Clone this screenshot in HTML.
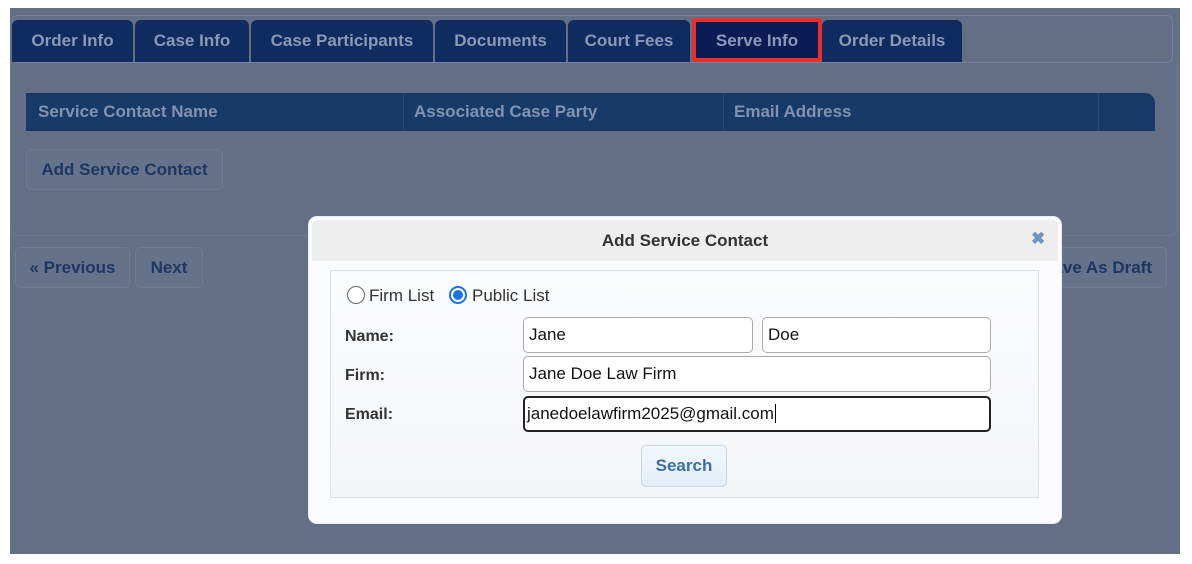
<!DOCTYPE html>
<html><head><meta charset="utf-8"><style>
*{box-sizing:border-box;margin:0;padding:0}
body{width:1192px;height:564px;background:#fff;position:relative;overflow:hidden;font-family:"Liberation Sans",Arial,sans-serif}
.a{position:absolute}
.ov{left:10px;top:8px;width:1170px;height:546px;background:#646e85}
.tab{top:20px;height:42px;background:#0f2b5f;border-radius:6px 6px 0 0;color:#8a9ab6;font-weight:bold;font-size:17px;line-height:42px;text-align:center}
.hdr{left:26px;top:93px;width:1129px;height:38px;background:#183a68;border-radius:0 10px 0 0;color:#8392ae;font-weight:bold;font-size:17px;line-height:38px}
.btn{border:1px solid #6f7b95;border-radius:5px;color:#1c3763;font-weight:bold;font-size:17px;text-align:center;background:#66728a}
.lbl{left:345px;font-weight:bold;font-size:16px;color:#333}
.inp{background:#fff;border:1px solid #aaa;border-radius:5px;font-size:17px;color:#111;padding-left:5px;line-height:34px}
</style></head><body>
<div class="a ov"></div>
<div class="a" style="left:12px;top:15px;width:1161px;height:48px;border:1px solid #7680a0;border-radius:6px"></div>
<div class="a" style="left:10px;top:62px;width:1168px;height:174px;border:1px solid #6e7895;border-top:none;border-radius:0 0 8px 8px"></div>
<div class="a tab" style="left:12px;width:121px">Order Info</div>
<div class="a tab" style="left:135px;width:114px">Case Info</div>
<div class="a tab" style="left:251px;width:182px">Case Participants</div>
<div class="a tab" style="left:435px;width:131px">Documents</div>
<div class="a tab" style="left:568px;width:122px">Court Fees</div>
<div class="a tab" style="left:692px;top:18px;width:130px;height:44px;background:#0b1c55;border:4px solid #e8302a;border-radius:2px;line-height:38px">Serve Info</div>
<div class="a tab" style="left:822px;width:140px">Order Details</div>
<div class="a hdr">
<span class="a" style="left:12px">Service Contact Name</span>
<span class="a" style="left:377px;top:0;width:1px;height:38px;background:#2a4a76"></span>
<span class="a" style="left:388px">Associated Case Party</span>
<span class="a" style="left:697px;top:0;width:1px;height:38px;background:#2a4a76"></span>
<span class="a" style="left:708px">Email Address</span>
<span class="a" style="left:1072px;top:0;width:1px;height:38px;background:#2a4a76"></span>
</div>
<div class="a btn" style="left:26px;top:149px;width:197px;height:41px;line-height:39px">Add Service Contact</div>
<div class="a btn" style="left:15px;top:247px;width:115px;height:41px;line-height:39px">« Previous</div>
<div class="a btn" style="left:135px;top:247px;width:68px;height:41px;line-height:39px">Next</div>
<div class="a btn" style="left:1000px;top:247px;width:167px;height:41px;line-height:39px;text-align:right;padding-right:14px">Save As Draft</div>

<div class="a" style="left:308px;top:216px;width:754px;height:308px;background:#fbfcfd;border-radius:9px;border:1px solid #e8eef6"></div>
<div class="a" style="left:312px;top:220px;width:746px;height:41px;background:#eeeeee;border-radius:6px 6px 0 0;text-align:center;font-weight:bold;font-size:17px;line-height:41px;color:#333">Add Service Contact</div>
<div class="a" style="left:1031px;top:229px;color:#6f94c4;font-weight:bold;font-size:17px">✖</div>
<div class="a" style="left:330px;top:270px;width:709px;height:228px;border:1px solid #dcdfe3;background:linear-gradient(#fbfcfd,#f4f5f7)"></div>
<div class="a" style="left:347px;top:286px;width:18px;height:18px;border:1.5px solid #666;border-radius:50%;background:#fff"></div>
<div class="a" style="left:369px;top:286px;font-size:17px;color:#333">Firm List</div>
<div class="a" style="left:449px;top:286px;width:18px;height:18px;border:2px solid #1a73e8;border-radius:50%;background:#fff"></div>
<div class="a" style="left:453px;top:290px;width:10px;height:10px;border-radius:50%;background:#1a73e8"></div>
<div class="a" style="left:472px;top:286px;font-size:17px;color:#333">Public List</div>
<div class="a lbl" style="top:328px">Name:</div>
<div class="a lbl" style="top:367px">Firm:</div>
<div class="a lbl" style="top:406px">Email:</div>
<div class="a inp" style="left:523px;top:317px;width:230px;height:36px">Jane</div>
<div class="a inp" style="left:762px;top:317px;width:229px;height:36px">Doe</div>
<div class="a inp" style="left:523px;top:356px;width:468px;height:36px">Jane Doe Law Firm</div>
<div class="a inp" style="left:523px;top:396px;width:468px;height:36px;border:2px solid #222;line-height:32px;padding-left:2px">janedoelawfirm2025@gmail.com<span style="border-left:1px solid #000;margin-left:1px"></span></div>
<div class="a" style="left:641px;top:445px;width:86px;height:42px;border:1px solid #c5d8ea;border-radius:5px;background:linear-gradient(#f4f8fc,#e2eef9);color:#3a6ea5;font-weight:bold;font-size:17px;text-align:center;line-height:40px">Search</div>
</body></html>
